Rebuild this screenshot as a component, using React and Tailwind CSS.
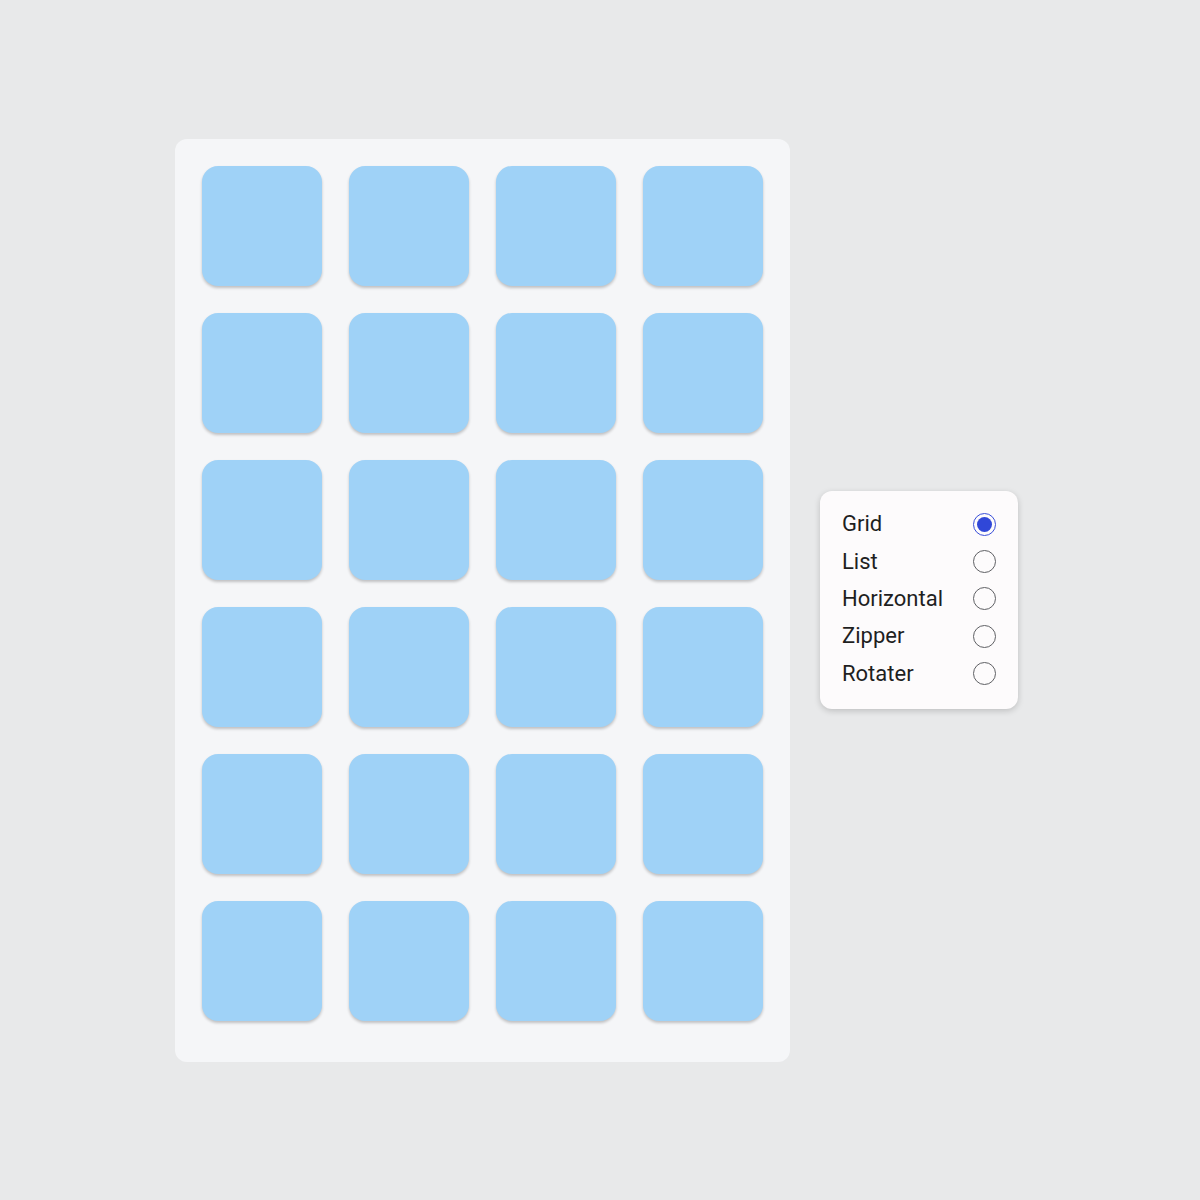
const options = ["Grid", "List", "Horizontal", "Zipper", "Rotater"];

function Radio({ checked }) {
  return (
    <span
      className={
        "w-[23px] h-[23px] rounded-full border-[1.5px] flex items-center justify-center " +
        (checked ? "border-[#3a4fd9]" : "border-[#5f6064]")
      }
    >
      {checked && <span className="w-[15px] h-[15px] rounded-full bg-[#3047d8]" />}
    </span>
  );
}

export default function App() {
  const tiles = Array.from({ length: 24 }, (_, i) => i);

  return (
    <div className="min-h-[1200px] bg-[#e8e9ea] flex items-center justify-center pr-[7px] font-['Roboto',sans-serif]">
      <div className="bg-[#f5f6f8] rounded-[12px] pt-[27px] px-[27px] pb-[41px] grid grid-cols-4 gap-[27px]">
        {tiles.map((t) => (
          <div
            key={t}
            className="w-[120px] h-[120px] rounded-[16px] bg-[#9fd2f7] shadow-[0_2px_3px_rgba(0,0,0,0.22)]"
          />
        ))}
      </div>

      <div className="ml-[30px] w-[198px] bg-[#fdfbfc] rounded-[12px] shadow-[0_2px_6px_rgba(0,0,0,0.18)] pt-[15px] pb-[17px] px-[22px]">
        {options.map((o, i) => (
          <div key={o} className="h-[37.3px] flex items-center justify-between">
            <span className="text-[22px] text-[#1f1f1f] leading-none">{o}</span>
            <Radio checked={i === 0} />
          </div>
        ))}
      </div>
    </div>
  );
}
